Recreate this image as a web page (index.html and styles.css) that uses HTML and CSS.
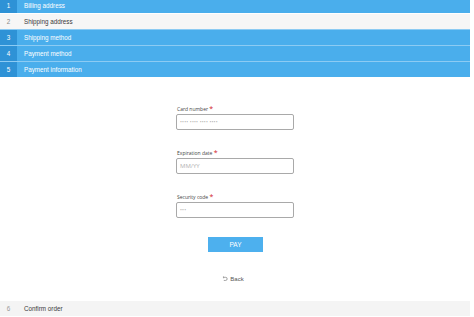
FILE: index.html
```html
<!DOCTYPE html>
<html>
<head>
<meta charset="utf-8">
<link rel="stylesheet" href="styles.css">
</head>
<body>
<div class="page">
  <div class="steps">
    <div class="step active first"><span class="num">1</span><span class="title">Billing address</span></div>
    <div class="step done"><span class="num">2</span><span class="title">Shipping address</span></div>
    <div class="step active"><span class="num">3</span><span class="title">Shipping method</span></div>
    <div class="step active"><span class="num">4</span><span class="title">Payment method</span></div>
    <div class="step active"><span class="num">5</span><span class="title">Payment information</span></div>
  </div>
  <div class="form">
    <div class="field">
      <div class="label">Card number <span class="req">*</span></div>
      <div class="input"><span class="ph dots">•••• •••• •••• ••••</span></div>
    </div>
    <div class="field">
      <div class="label">Expiration date <span class="req">*</span></div>
      <div class="input"><span class="ph">MM/YY</span></div>
    </div>
    <div class="field">
      <div class="label">Security code <span class="req">*</span></div>
      <div class="input"><span class="ph dots">•••</span></div>
    </div>
    <div class="pay">PAY</div>
    <div class="back">
      <svg class="back-icon" viewBox="0 0 10 10" width="6" height="6"><path d="M3 2.2 H6 A2.6 2.6 0 0 1 6 7.4 H3" fill="none" stroke="#666" stroke-width="1"/><path d="M3.4 0.8 L1.6 2.2 L3.4 3.6" fill="none" stroke="#666" stroke-width="1"/></svg>
      <span>Back</span>
    </div>
  </div>
  <div class="step pending"><span class="num">6</span><span class="title">Confirm order</span></div>
</div>
</body>
</html>
```
FILE: styles.css
```css
html, body {
  margin: 0;
  padding: 0;
  background: #ffffff;
}
body {
  font-family: "Liberation Sans", Arial, sans-serif;
}
.page {
  width: 470px;
  height: 317px;
  display: flex;
  flex-direction: column;
}
.steps {
  display: flex;
  flex-direction: column;
  gap: 1px;
  background: #8ccbf3;
  margin-top: -2px;
}
.step {
  height: 15px;
  display: flex;
  align-items: center;
  font-size: 6.3px;
  flex: none;
}
.step .num {
  width: 17px;
  height: 100%;
  display: flex;
  align-items: center;
  justify-content: center;
  flex: none;
}
.step .title {
  padding-left: 7px;
}
.step.active {
  background: #4aaeec;
  color: #ffffff;
}
.step.active .num {
  background: #2e92d6;
}
.step.done {
  background: #f6f6f6;
  color: #3a3a3a;
  border-top: 1px solid #ffffff;
  margin-top: -1px;
  height: 15px;
}
.step.done .num {
  color: #888;
}
.step.pending {
  background: #f4f4f4;
  color: #3a3a3a;
  margin-top: 18px;
}
.step.pending .num {
  color: #999;
}
.form {
  display: flex;
  flex-direction: column;
  align-items: center;
  padding-top: 28px;
}
.field {
  width: 118px;
  display: flex;
  flex-direction: column;
  margin-bottom: 19px;
}
.label {
  height: 8px;
  line-height: 8px;
  font-size: 5px;
  color: #444;
  padding-left: 1px;
  margin-bottom: 1px;
  font-family: "Open Sans", "Liberation Sans", sans-serif;
}
.req {
  color: #d0202a;
  font-size: 7px;
  vertical-align: top;
  line-height: 7px;
}
.input {
  height: 16px;
  box-sizing: border-box;
  border: 1px solid #a9a9a9;
  border-radius: 2px;
  display: flex;
  align-items: center;
  padding-left: 3px;
}
.ph {
  color: #b3b3b3;
  font-size: 6px;
  font-family: "Open Sans", "Liberation Sans", sans-serif;
}
.ph.dots {
  font-size: 5px;
  letter-spacing: 0.2px;
}
.pay {
  width: 55px;
  height: 15px;
  background: #4db0ee;
  color: #ffffff;
  font-size: 6.5px;
  display: flex;
  align-items: center;
  justify-content: center;
  margin-left: 1px;
}
.back {
  margin-top: 23px;
  height: 8px;
  display: flex;
  align-items: center;
  gap: 2px;
  font-size: 6px;
  color: #555;
  margin-left: -4px;
}
```
